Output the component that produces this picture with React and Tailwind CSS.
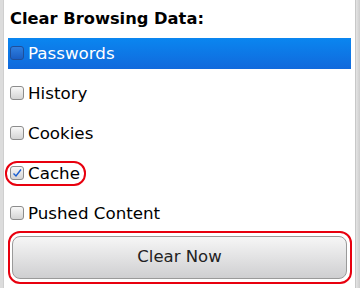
import React from 'react';

const rows = [
  { label: 'Passwords', selected: true },
  { label: 'History' },
  { label: 'Cookies' },
  { label: 'Cache', checked: true, marked: true },
  { label: 'Pushed Content' },
];

const Box = ({ checked, selected }) => (
  <span
    className={
      selected
        ? 'w-[14px] h-[14px] rounded-[3px] border border-[#1f4f9a] bg-gradient-to-b from-[#2f7fe0] to-[#1a5ec4] shrink-0'
        : 'w-[14px] h-[14px] rounded-[3px] border border-[#8c8c8c] bg-gradient-to-b from-[#f8f8f8] to-[#d4d4d4] shrink-0 flex items-center justify-center'
    }
  >
    {checked && (
      <svg width="12" height="12" viewBox="0 0 12 12">
        <path d="M2.5 6.5 L5 9 L10 2.5" fill="none" stroke="#1a5ed0" strokeWidth="1.4" />
      </svg>
    )}
  </span>
);

export default function App() {
  return (
    <div className="w-[360px] h-[288px] flex bg-white overflow-hidden" style={{ fontFamily: '"DejaVu Sans", sans-serif' }}>
      <div className="w-[4px] bg-[#dcdcdc] border-r border-[#cfcfcf]" />
      <div className="flex-1 flex flex-col pt-[8px] pl-[4px] pr-[4px]">
        <div className="pl-[2px] text-[16.3px] font-bold text-black leading-[21px] h-[25px]">Clear Browsing Data:</div>
        <div className="flex flex-col">
          {rows.map((r) => (
            <div key={r.label} className="h-[40px] flex items-center">
              <div
                className={
                  r.selected
                    ? 'relative h-[31px] w-full flex items-center gap-[4px] pl-[2px] bg-gradient-to-b from-[#0a86f0] to-[#1169dc] text-white'
                    : 'relative h-[31px] w-full flex items-center gap-[4px] pl-[2px] text-black'
                }
              >
                <Box checked={r.checked} selected={r.selected} />
                <span className="text-[16.7px] leading-none">{r.label}</span>
                {r.marked && (
                  <div className="absolute left-[-3px] top-[3px] w-[81px] h-[25px] rounded-[12px] border-2 border-[#e8000e]" />
                )}
              </div>
            </div>
          ))}
        </div>
        <div className="relative mt-[3px] mx-[4px] h-[43px]">
          <button className="w-full h-full rounded-[8px] border border-[#9a9a9a] bg-gradient-to-b from-[#f6f6f6] to-[#cfcfd1] text-[16.5px] text-[#222]">
            Clear Now
          </button>
          <div className="absolute -left-[4px] -top-[5px] -right-[5px] -bottom-[5px] rounded-[12px] border-2 border-[#e8000e]" />
        </div>
      </div>
      <div className="w-[5px] bg-gradient-to-r from-[#e4e4e4] to-[#cdcdcd] border-l border-[#c8c8c8]" />
    </div>
  );
}
